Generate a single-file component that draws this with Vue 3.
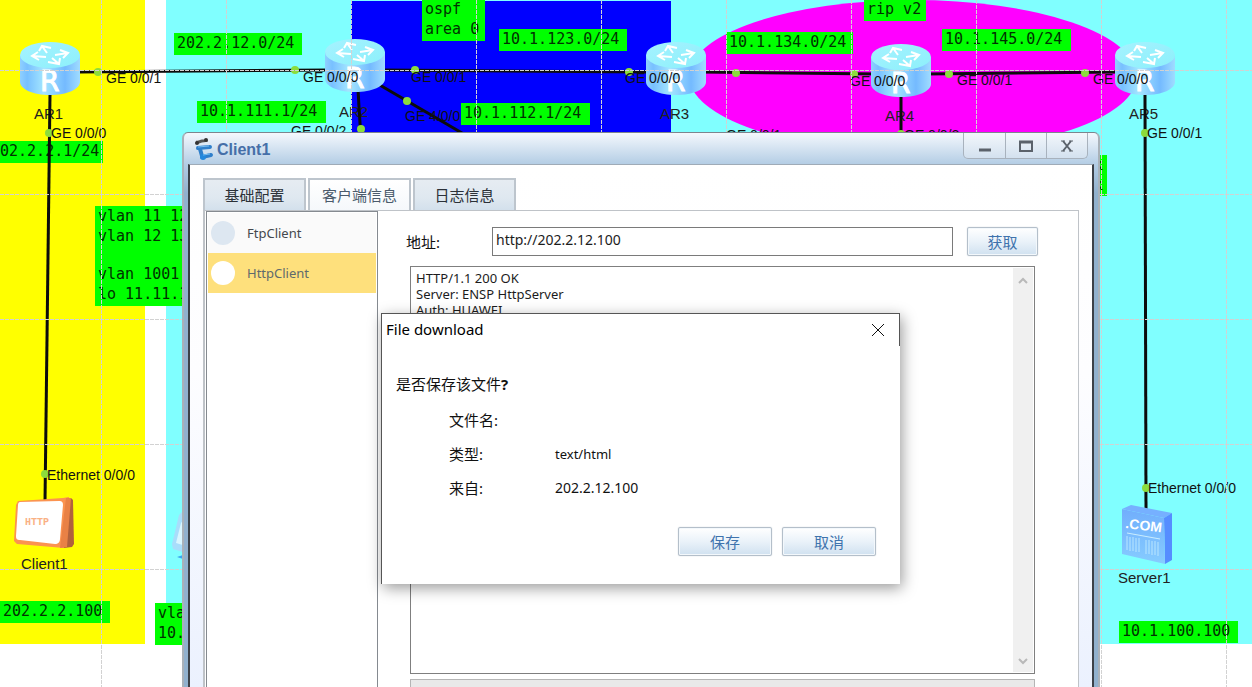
<script setup>
import { ref } from 'vue';

const rows = [70, 194, 319, 444, 569];
const columns = [101, 226, 351, 476, 601, 726, 851, 976, 1101, 1226];

const routers = [
    { name: 'AR1', x: 20, y: 42, tx: 34, ty: 119 },
    { name: 'AR2', x: 325, y: 39, tx: 339, ty: 117 },
    { name: 'AR3', x: 646, y: 42, tx: 660, ty: 119 },
    { name: 'AR4', x: 871, y: 44, tx: 885, ty: 121 },
    { name: 'AR5', x: 1115, y: 42, tx: 1129, ty: 119 },
];

const links = [
    [78, 72, 330, 70],
    [380, 70, 650, 72],
    [700, 72, 880, 74],
    [925, 74, 1120, 72],
    [50, 94, 45, 502],
    [358, 90, 361, 140],
    [378, 84, 474, 140],
    [901, 96, 901, 140],
    [1145, 94, 1146, 512],
];

const dots = [
    [98, 72], [295, 70], [415, 70], [407, 101], [361, 129], [629, 72], [736, 73],
    [854, 74], [949, 74], [1085, 73], [49, 133], [1145, 133], [45, 474], [1146, 488], [901, 134],
];

const ports = [
    { text: 'GE 0/0/1', x: 106, y: 83 },
    { text: 'GE 0/0/0', x: 51, y: 138 },
    { text: 'GE 0/0/0', x: 303, y: 82 },
    { text: 'GE 0/0/1', x: 411, y: 82 },
    { text: 'GE 4/0/0', x: 405, y: 121 },
    { text: 'GE 0/0/2', x: 291, y: 136 },
    { text: 'GE 0/0/0', x: 625, y: 83 },
    { text: 'GE 0/0/1', x: 726, y: 140 },
    { text: 'GE 0/0/0', x: 850, y: 86 },
    { text: 'GE 0/0/2', x: 904, y: 140 },
    { text: 'GE 0/0/1', x: 957, y: 85 },
    { text: 'GE 0/0/0', x: 1093, y: 84 },
    { text: 'GE 0/0/1', x: 1147, y: 138 },
    { text: 'Ethernet 0/0/0', x: 47, y: 480 },
    { text: 'Ethernet 0/0/0', x: 1148, y: 493 },
];

const notes = [
    { x: 174, y: 33, w: 128, h: 22, lines: [['202.2.12.0/24', 15]] },
    { x: 197, y: 101, w: 129, h: 22, lines: [['10.1.111.1/24', 15]] },
    { x: 422, y: -2, w: 63, h: 43, lines: [['ospf', 16], ['area 0', 36]] },
    { x: 499, y: 29, w: 128, h: 22, lines: [['10.1.123.0/24', 15]] },
    { x: 461, y: 103, w: 129, h: 22, lines: [['10.1.112.1/24', 15]] },
    { x: 726, y: 32, w: 127, h: 22, lines: [['10.1.134.0/24', 15]] },
    { x: 864, y: -1, w: 62, h: 22, lines: [['rip v2', 15]] },
    { x: 942, y: 29, w: 129, h: 22, lines: [['10.1.145.0/24', 15]] },
    { x: -3, y: 141, w: 106, h: 22, lines: [['02.2.2.1/24', 15]] },
    { x: 95, y: 206, w: 140, h: 100, lines: [['vlan 11 12', 15], ['vlan 12 13', 35], ['vlan 1001', 73], ['lo 11.11.11.11', 93]] },
    { x: 0, y: 601, w: 110, h: 22, lines: [['202.2.2.100', 15]] },
    { x: 155, y: 603, w: 80, h: 42, lines: [['vlan 1', 15], ['10.1.1', 35]] },
    { x: 1091, y: 155, w: 16, h: 41, lines: [['k', 15], ['k', 35]] },
    { x: 1119, y: 621, w: 119, h: 22, lines: [['10.1.100.100', 15]] },
];

const tabs = ['基础配置', '客户端信息', '日志信息'];
const activeTab = ref('客户端信息');

const clients = ['FtpClient', 'HttpClient'];
const activeClient = ref('HttpClient');

const address = ref('http://202.2.12.100');
const response = ref('HTTP/1.1 200 OK\nServer: ENSP HttpServer\nAuth: HUAWEI');

const showDownload = ref(true);
const details = [
    { label: '文件名:', value: '' },
    { label: '类型:', value: 'text/html' },
    { label: '来自:', value: '202.2.12.100', wide: true },
];
</script>

<template>
    <main class="desktop">
        <svg class="topology" aria-label="Network topology">
            <defs>
                <linearGradient id="side" x1="0" x2="1" y1="0" y2="0">
                    <stop offset="0" stop-color="#8fd0ff" />
                    <stop offset="0.12" stop-color="#78c0ff" />
                    <stop offset="0.4" stop-color="#a4e6ff" />
                    <stop offset="0.75" stop-color="#74baff" />
                    <stop offset="1" stop-color="#a0dcff" />
                </linearGradient>
                <linearGradient id="lid" x1="0" x2="1" y1="0" y2="1">
                    <stop offset="0" stop-color="#a6f2ff" />
                    <stop offset="1" stop-color="#8cf0fb" />
                </linearGradient>
                <linearGradient id="box" x1="0" x2="0" y1="0" y2="1">
                    <stop offset="0" stop-color="#71aefc" />
                    <stop offset="1" stop-color="#86ccff" />
                </linearGradient>
                <symbol id="router" viewBox="0 0 60 54" width="60" height="54">
                    <path d="M0 13v27c0 7 13 13 30 13s30-6 30-13V13z" fill="url(#side)" />
                    <ellipse cx="30" cy="13" rx="30" ry="13" fill="url(#lid)" />
                    <g fill="none" stroke="#fff" stroke-width="2">
                        <path d="M19 9l3-5 9 2M22 4l5 7" />
                        <path d="M40 8l8 3-5 5M48 11l-13 2" />
                        <path d="M19 18l-7-4 6-4M12 14l14 1" />
                        <path d="M28 20l11 2 1-6M39 22l-7-6" />
                    </g>
                    <text class="router-letter" x="20" y="49">R</text>
                </symbol>
            </defs>

            <rect class="zone-yellow" x="0" y="0" width="145" height="644" />
            <rect class="zone-cyan" x="166" y="0" width="4000" height="644" />
            <rect class="zone-blue" x="351" y="1" width="320" height="300" />
            <ellipse class="zone-magenta" cx="913" cy="76" rx="224" ry="76" />

            <g v-for="note in notes" :key="`${note.x}-${note.y}`">
                <rect class="note" :x="note.x" :y="note.y" :width="note.w" :height="note.h" />
                <text v-for="line in note.lines" :key="line[1]" class="note-text" :x="note.x + 3" :y="note.y + line[1]">{{ line[0] }}</text>
            </g>

            <text v-for="router in routers" :key="router.name" class="device-name" :x="router.tx" :y="router.ty">{{ router.name }}</text>
            <line v-for="(link, i) in links" :key="i" class="link" :x1="link[0]" :y1="link[1]" :x2="link[2]" :y2="link[3]" />
            <use v-for="router in routers" :key="`${router.name}-icon`" href="#router" :x="router.x" :y="router.y" />
            <circle v-for="(dot, i) in dots" :key="i" class="dot" :cx="dot[0]" :cy="dot[1]" r="4" />

            <!-- http client -->
            <path d="M66 499l5-1 2 2 1 44-2 3-8 1z" fill="#b1623c" />
            <path d="M18 501l45-3 6-1-5 51-47-4-3-3 2-36z" fill="#fb9350" />
            <path d="M66 498l5 0-4 49-7 1z" fill="#e98145" />
            <path d="M20 502l39-1c3 0 4 1 4 4l-3 34c0 3-2 5-5 5l-35-4c-3 0-4-1-4-4l2-31c0-2 1-3 2-3z" fill="#fff" />
            <text class="http-text" x="25" y="525">HTTP</text>
            <text class="device-name" x="21" y="569">Client1</text>

            <!-- monitor behind the window -->
            <path d="M184 510l-5 5-7 29 1 5 13 4z" fill="#a8ddfb" />
            <path d="M184 519l-3 4-5 20 10 3z" fill="#d9f6ff" />
            <path d="M186 554l-9 3 9 3z" fill="#3aa5f2" />

            <!-- server -->
            <path d="M1122 509l9-4 41 8-8 5z" fill="#76b0ff" />
            <path d="M1164 518l8-5v47l-7 4z" fill="#568dff" />
            <path d="M1122 509l42 9 1 46-43-10z" fill="url(#box)" />
            <text class="com-text" x="1125" y="528" transform="rotate(7 1125 528)">.COM</text>
            <path d="M1127 533l33 6" stroke="#c9edff" stroke-width="1" />
            <g stroke="#b9e6ff" stroke-width="1">
                <path d="M1127 536v14M1130 537v14M1133 537v14M1136 538v14M1139 538v14M1146 540v14M1149 540v14M1152 541v14M1155 541v14M1158 542v14" />
            </g>
            <text class="device-name" x="1118" y="583">Server1</text>

            <text v-for="port in ports" :key="`${port.x}-${port.y}`" class="port" :x="port.x" :y="port.y">{{ port.text }}</text>

            <g class="grid">
                <line v-for="y in rows" :key="`h${y}`" x1="0" x2="100%" :y1="y" :y2="y" />
                <line v-for="x in columns" :key="`v${x}`" y1="0" y2="100%" :x1="x" :x2="x" />
            </g>
        </svg>

        <section class="window" aria-label="Client1">
            <header class="titlebar">
                <svg class="app-icon" width="20" height="24" viewBox="0 0 20 24" aria-hidden="true">
                    <path d="M2 5c3 1 4-1 6-1s4 0 5-1" fill="none" stroke="#555" stroke-width="3" />
                    <circle cx="3" cy="6" r="2" fill="#333" />
                    <circle cx="12" cy="3" r="2" fill="#333" />
                    <path d="M4 11l12-1M6 12l2 7M8 20l9-2" fill="none" stroke="#2f7fcb" stroke-width="4" stroke-linecap="round" />
                    <circle cx="9" cy="20" r="3" fill="#2388dd" />
                    <path d="M4 10l11-1M9 18l7-1" stroke="#74bdf2" stroke-width="1" />
                </svg>
                <h1 class="title">Client1</h1>
                <div class="window-buttons">
                    <button type="button" aria-label="Minimize">
                        <svg width="14" height="12" viewBox="0 0 14 12"><path d="M1 10h12" stroke="#5b626b" stroke-width="3" /></svg>
                    </button>
                    <button type="button" aria-label="Maximize">
                        <svg width="14" height="12" viewBox="0 0 14 12"><path d="M1 2h12v9H1z" fill="none" stroke="#5b626b" stroke-width="2" /><path d="M0 2h14" stroke="#5b626b" stroke-width="3" /></svg>
                    </button>
                    <button type="button" aria-label="Close">
                        <svg width="14" height="12" viewBox="0 0 14 12"><path d="M3 1l8 10M11 1L3 11" stroke="#5b626b" stroke-width="2" /><path d="M1 1h4M9 1h4M1 11h4M9 11h4" stroke="#5b626b" /></svg>
                    </button>
                </div>
            </header>

            <div class="window-body">
                <nav class="tabs">
                    <button
                        v-for="tab in tabs"
                        :key="tab"
                        type="button"
                        class="tab"
                        :class="{ 'tab--active': tab === activeTab }"
                        @click="activeTab = tab"
                    >{{ tab }}</button>
                </nav>

                <div class="pane">
                    <div class="clients">
                        <button
                            v-for="client in clients"
                            :key="client"
                            type="button"
                            class="client"
                            :class="{ 'client--active': client === activeClient }"
                            @click="activeClient = client"
                        ><span class="client-dot"></span>{{ client }}</button>
                    </div>

                    <form class="request" @submit.prevent>
                        <div class="address-row">
                            <label for="address">地址:</label>
                            <input id="address" v-model="address" type="text">
                            <button type="submit" class="btn btn--get">获取</button>
                        </div>
                        <div class="response">
                            <textarea v-model="response" aria-label="HTTP response" readonly></textarea>
                            <div class="scrollbar">
                                <button type="button" aria-label="Scroll up">
                                    <svg width="12" height="8" viewBox="0 0 12 8"><path d="M2 7l4-4 4 4" /></svg>
                                </button>
                                <button type="button" aria-label="Scroll down">
                                    <svg width="12" height="8" viewBox="0 0 12 8"><path d="M2 1l4 4 4-4" /></svg>
                                </button>
                            </div>
                        </div>
                        <div class="status"></div>
                    </form>
                </div>
            </div>
        </section>

        <section v-if="showDownload" class="dialog" role="dialog" aria-labelledby="dialog-title">
            <header class="dialog-head">
                <h2 id="dialog-title">File download</h2>
                <button type="button" aria-label="Close" @click="showDownload = false">
                    <svg width="14" height="14" viewBox="0 0 14 14"><path d="M1 1l12 12M13 1L1 13" stroke="#111" stroke-width="1" /></svg>
                </button>
            </header>
            <div class="dialog-body">
                <p class="question">是否保存该文件<b>?</b></p>
                <dl class="details">
                    <template v-for="item in details" :key="item.label">
                        <dt>{{ item.label }}</dt>
                        <dd :class="{ wide: item.wide }">{{ item.value }}</dd>
                    </template>
                </dl>
                <div class="dialog-actions">
                    <button type="button" class="btn" @click="showDownload = false">保存</button>
                    <button type="button" class="btn" @click="showDownload = false">取消</button>
                </div>
            </div>
        </section>
    </main>
</template>

<style>
body {
    background: #fff;
}
</style>

<style scoped>
.desktop {
    position: relative;
    height: 100vh;
    overflow: hidden;
    font-family: "Noto Sans", "Noto Sans CJK SC", sans-serif;
    font-size: 13px;
    color: #1c1c1c;
}

.desktop * {
    box-sizing: border-box;
}

button {
    padding: 0;
    border: none;
    background: none;
    font: inherit;
    color: inherit;
}

/* Topology canvas */
.topology {
    display: block;
    width: 100%;
    height: 100%;
}

.zone-yellow {
    fill: #ff0;
}

.zone-cyan {
    fill: #80ffff;
}

.zone-blue {
    fill: #00f;
}

.zone-magenta {
    fill: #f0f;
}

.note {
    fill: #0f0;
}

.note-text {
    font-family: "DejaVu Sans Mono", monospace;
    font-size: 15px;
    fill: #003200;
}

.port {
    font-family: "Liberation Sans", sans-serif;
    font-size: 14px;
    fill: #111;
}

.device-name {
    font-family: "Liberation Sans", sans-serif;
    font-size: 15px;
    fill: #222;
}

.router-letter {
    font-family: "DejaVu Sans", sans-serif;
    font-size: 28px;
    fill: #fff;
    stroke: #fff;
    stroke-width: 1;
}

.http-text {
    font-family: "Liberation Mono", monospace;
    font-size: 10px;
    font-weight: bold;
    fill: #f9b184;
}

.com-text {
    font-family: "Liberation Sans", sans-serif;
    font-size: 14px;
    font-weight: bold;
    fill: #fff;
}

.link {
    stroke: #0c0c0c;
    stroke-width: 3;
}

.dot {
    fill: #8cdc3c;
}

.grid line {
    stroke: #d2d2d2;
    stroke-width: 1;
    stroke-dasharray: 4 1;
    shape-rendering: crispEdges;
}

/* Client window */
.window {
    position: absolute;
    top: 132px;
    right: 152px;
    bottom: 0;
    left: 182px;
    display: flex;
    flex-direction: column;
    padding: 0 4px;
    border: 2px solid #a9b1b9;
    border-top: 1px solid #7d858e;
    border-bottom: none;
    border-radius: 6px 6px 0 0;
    background: linear-gradient(#f4f8fd, #b2cce4 32px, #91b1ce 60px);
}

.titlebar {
    display: flex;
    align-items: flex-start;
    height: 31px;
    padding: 0 6px;
}

.app-icon {
    margin-top: 4px;
}

.title {
    flex: 1;
    margin: 0 0 0 3px;
    font-family: "Liberation Sans", sans-serif;
    font-size: 16px;
    line-height: 34px;
    color: #456fa8;
}

.window-buttons {
    display: flex;
    height: 26px;
    border: 1px solid #a8b2bd;
    border-top: none;
    border-radius: 0 0 5px 5px;
    background: linear-gradient(#f3f7fb, #d3e1ef);
}

.window-buttons button {
    display: flex;
    align-items: center;
    justify-content: center;
    width: 41px;
}

.window-buttons button + button {
    border-left: 1px solid #a8b2bd;
}

.window-body {
    flex: 1;
    display: flex;
    flex-direction: column;
    min-height: 0;
    padding: 13px 13px 0;
    border: 2px solid #3c4148;
    border-top: 1px solid #9fabb7;
    border-bottom: none;
    background: linear-gradient(#fff, #fdfdff 40%, #ebf1fe);
}

.tabs {
    display: flex;
    gap: 2px;
}

.tab {
    width: 103px;
    height: 32px;
    border: 2px solid #bdc5cd;
    border-bottom: none;
    background: linear-gradient(#e6ecf2, #dfe8f0 60%, #d3e0ec);
    font-size: 15px;
    line-height: 28px;
    color: #2b3138;
}

.tab--active {
    background: linear-gradient(#fff, #f5f8fb);
    color: #4b5b6c;
}

.pane {
    flex: 1;
    display: flex;
    min-height: 0;
    padding-left: 1px;
    border: 2px solid #bfc3c8;
    border-width: 1px 1px 0 2px;
    background: #fff;
}

.clients {
    width: 172px;
    padding: 1px;
    border: 1px solid #858a90;
    border-bottom: none;
}

.client {
    display: flex;
    align-items: center;
    gap: 12px;
    width: 100%;
    height: 40px;
    padding-left: 3px;
    background: #fafafa;
    color: #44484e;
}

.client--active {
    background: #fee07c;
    color: #5f6a6c;
}

.client-dot {
    width: 24px;
    height: 24px;
    border-radius: 50%;
    background: #dde7f1;
}

.client--active .client-dot {
    background: #fff;
}

.request {
    flex: 1;
    display: flex;
    flex-direction: column;
    min-width: 0;
    padding: 16px 43px 0 32px;
}

.address-row {
    display: flex;
    align-items: center;
    margin: 0 -3px 10px -4px;
}

.address-row label {
    width: 86px;
    font-size: 15px;
    color: #111;
}

.address-row input {
    flex: 1;
    min-width: 0;
    height: 29px;
    padding: 0 3px 4px;
    border: 1px solid #7a7a7a;
    font: inherit;
    font-size: 14px;
    color: #1c1c1c;
}

.btn {
    width: 94px;
    height: 29px;
    border: 1px solid #b4bfca;
    border-radius: 2px;
    background: linear-gradient(#fff, #eaf2f9 50%, #d0e1f0);
    box-shadow: inset 0 0 0 1px #f3f8fc, 0 0 1px #aab4be;
    font-size: 15px;
    line-height: 22px;
    color: #3e73ad;
}

.btn--get {
    width: 71px;
    margin-left: 14px;
}

.response {
    flex: 1;
    display: flex;
    min-height: 0;
    padding: 1px;
    border: 1px solid #7f7f7f;
}

.response textarea {
    flex: 1;
    min-width: 0;
    padding: 2px 4px;
    border: none;
    outline: none;
    resize: none;
    overflow: hidden;
    font: inherit;
    line-height: 16px;
    color: #1c1c1c;
}

.scrollbar {
    display: flex;
    flex-direction: column;
    justify-content: space-between;
    width: 20px;
    background: #f0f0f0;
}

.scrollbar button {
    height: 22px;
}

.scrollbar path {
    fill: none;
    stroke: #b9b9b9;
    stroke-width: 2;
}

.status {
    height: 8px;
    margin-top: 5px;
    border: 1px solid #b5b5b5;
    border-bottom: none;
    background: #e9e9e9;
}

/* Download dialog */
.dialog {
    position: absolute;
    top: 313px;
    left: 381px;
    width: 519px;
    border-top: 1px solid #555;
    border-left: 1px solid #555;
    background: #fff;
    box-shadow: 2px 4px 14px rgba(0, 0, 0, 0.4);
    color: #111;
}

.dialog-head {
    display: flex;
    align-items: center;
    justify-content: space-between;
    height: 32px;
    padding: 0 14px 0 4px;
    border-right: 1px solid #555;
}

.dialog-head h2 {
    margin: 0;
    font-size: 15px;
    font-weight: 400;
    line-height: 20px;
    padding-bottom: 2px;
    color: #000;
}

.dialog-head button {
    display: flex;
}

.dialog-body {
    padding: 27px 24px 28px 14px;
}

.question {
    margin: 0 0 11px;
    font-size: 15px;
    line-height: 22px;
}

.details {
    display: grid;
    grid-template-columns: 106px 1fr;
    row-gap: 6px;
    margin: 0 0 25px 53px;
    line-height: 28px;
}

.details dt {
    font-size: 15px;
}

.details dd {
    margin: 0;
}

.details .wide {
    font-size: 14px;
}

.dialog-actions {
    display: flex;
    justify-content: flex-end;
    gap: 10px;
}
</style>
